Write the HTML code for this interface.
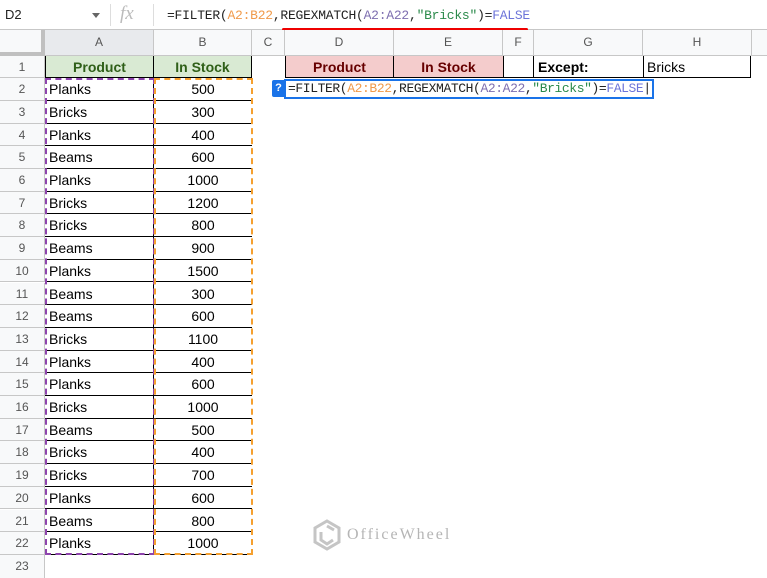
<!DOCTYPE html><html><head><style>
body{margin:0;width:767px;height:573px;overflow:hidden;background:#fff;font-family:"Liberation Sans",Arial,sans-serif;position:relative}
.a{position:absolute;box-sizing:border-box}
.mono{font-family:"Liberation Mono",monospace}
.ch{position:absolute;top:30px;height:26px;border-right:1px solid #c7c7c7;border-bottom:1px solid #c7c7c7;background:#f8f9fa;color:#555;font-size:12px;text-align:center;line-height:25px;box-sizing:border-box}
.rh{position:absolute;left:0;width:45px;border-bottom:1px solid #c7c7c7;border-right:1px solid #c7c7c7;background:#f8f9fa;color:#555;font-size:12px;text-align:center;box-sizing:border-box}
.c{position:absolute;box-sizing:border-box;font-size:14px;color:#000;white-space:nowrap;overflow:hidden}
</style></head><body>
<div class="a" style="left:0;top:0;width:767px;height:30px;border-bottom:1px solid #c7c7c7;background:#fff"></div>
<div class="a" style="left:5px;top:7px;font-size:13px;color:#222">D2</div>
<div class="a" style="left:92px;top:13px;width:0;height:0;border-left:4px solid transparent;border-right:4px solid transparent;border-top:5px solid #666"></div>
<div class="a" style="left:110px;top:4px;width:1px;height:22px;background:#ddd"></div>
<div class="a" style="left:120px;top:3px;font-family:'Liberation Serif',serif;font-style:italic;font-size:19px;color:#bbb">fx</div>
<div class="a" style="left:153px;top:4px;width:1px;height:22px;background:#ddd"></div>
<div class="a mono" style="left:167px;top:8px;font-size:13px;color:#222;letter-spacing:-0.24px">=FILTER(<span style="color:#f09a4a">A2:B22</span>,REGEXMATCH(<span style="color:#7e6fb0">A2:A22</span>,<span style="color:#2b8a4b">"Bricks"</span>)=<span style="color:#6c74d9">FALSE</span></div>
<div class="a" style="left:282px;top:28px;width:246px;height:3px;background:#e00;border-radius:2px"></div>
<div class="a" style="left:0;top:30px;width:45px;height:26px;background:#f8f9fa;border-right:4px solid #c0c0c0;border-bottom:4px solid #c0c0c0"></div>
<div class="ch" style="left:45px;width:109px;background:#e8eaed">A</div>
<div class="ch" style="left:154px;width:98px">B</div>
<div class="ch" style="left:252px;width:33px">C</div>
<div class="ch" style="left:285px;width:109px">D</div>
<div class="ch" style="left:394px;width:109px">E</div>
<div class="ch" style="left:503px;width:31px">F</div>
<div class="ch" style="left:534px;width:109px">G</div>
<div class="ch" style="left:643px;width:109px">H</div>
<div class="ch" style="left:752px;width:20px"></div>
<div id="g"></div>
<script>
var prod=["Planks","Bricks","Planks","Beams","Planks","Bricks","Bricks","Beams","Planks","Beams","Beams","Bricks","Planks","Planks","Bricks","Beams","Bricks","Bricks","Planks","Beams","Planks"];
var st=[500,300,400,600,1000,1200,800,900,1500,300,600,1100,400,600,1000,500,400,700,600,800,1000];
var h="",rh=22.7;
function y(r){return 55.5+(r-1)*rh}
for(var r=1;r<=23;r++){h+='<div class="rh" style="top:'+y(r)+'px;height:'+rh+'px;line-height:'+rh+'px;'+(r==23?'border-bottom:none':'')+'">'+r+'</div>';}
h+='<div class="c" style="left:45px;top:'+y(1)+'px;width:109px;height:'+rh+'px;background:#d9ead3;color:#2f5f18;font-weight:bold;text-align:center;line-height:'+rh+'px;border:1px solid #000;border-top:none">Product</div>';
h+='<div class="c" style="left:154px;top:'+y(1)+'px;width:98px;height:'+rh+'px;background:#d9ead3;color:#2f5f18;font-weight:bold;text-align:center;line-height:'+rh+'px;border:1px solid #000;border-left:none;border-top:none">In Stock</div>';
for(var i=0;i<21;i++){var t=y(i+2);
h+='<div class="c" style="left:45px;top:'+t+'px;width:109px;height:'+rh+'px;line-height:'+rh+'px;padding-left:4px;border-bottom:1px solid #000;border-right:1px solid #000">'+prod[i]+'</div>';
h+='<div class="c" style="left:154px;top:'+t+'px;width:98px;height:'+rh+'px;line-height:'+rh+'px;text-align:center;border-bottom:1px solid #000">'+st[i]+'</div>';}
h+='<div class="a" style="left:45px;top:'+y(2)+'px;width:110px;height:'+(21*rh)+'px;border:2px dashed #8e44ad"></div>';
h+='<div class="a" style="left:154px;top:'+y(2)+'px;width:99px;height:'+(21*rh)+'px;border:2px dashed #f5a030"></div>';
var t1=y(1);
h+='<div class="c" style="left:285px;top:'+t1+'px;width:109px;height:'+rh+'px;background:#f4cccc;color:#660000;font-weight:bold;text-align:center;line-height:'+rh+'px;border:1px solid #000;border-top:none">Product</div>';
h+='<div class="c" style="left:393px;top:'+t1+'px;width:111px;height:'+rh+'px;background:#f4cccc;color:#660000;font-weight:bold;text-align:center;line-height:'+rh+'px;border:1px solid #000;border-top:none">In Stock</div>';
h+='<div class="c" style="left:503px;top:'+t1+'px;width:31px;height:'+rh+'px;border-bottom:1px solid #000"></div>';
h+='<div class="c" style="left:533px;top:'+t1+'px;width:111px;height:'+rh+'px;font-weight:bold;padding-left:4px;line-height:'+rh+'px;border:1px solid #000;border-top:none">Except:</div>';
h+='<div class="c" style="left:643px;top:'+t1+'px;width:108px;height:'+rh+'px;padding-left:4px;line-height:'+rh+'px;border:1px solid #000;border-top:none;border-left:none">Bricks</div>';
document.getElementById('g').innerHTML=h;
</script>
<div class="a" style="left:272px;top:80px;width:13px;height:17px;background:#1a73e8;color:#fff;font-size:11px;font-weight:bold;text-align:center;line-height:17px;border-radius:2px 0 0 2px">?</div>
<div class="a mono" style="left:284px;top:79px;width:370px;height:20px;border:2px solid #1a73e8;background:#fff;font-size:13px;line-height:16px;padding-left:2px;color:#222;letter-spacing:-0.4px;white-space:nowrap">=FILTER(<span style="color:#f09a4a">A2:B22</span>,REGEXMATCH(<span style="color:#7e6fb0">A2:A22</span>,<span style="color:#2b8a4b">"Bricks"</span>)=<span style="color:#6c74d9">FALSE</span>|</div>
<svg class="a" style="left:310px;top:518px" width="34" height="34" viewBox="0 0 34 34"><path d="M17 3 L29 10 L29 24 L17 31 L5 24 L5 10 Z M11 14 L11 22 L17 26 L23 22 M17 8 L24 12" fill="none" stroke="#c5c5c5" stroke-width="3"/></svg>
<div class="a" style="left:347px;top:526px;font-family:'Liberation Serif',serif;font-size:16px;letter-spacing:2px;color:#b5b5b5">OfficeWheel</div>
</body></html>
